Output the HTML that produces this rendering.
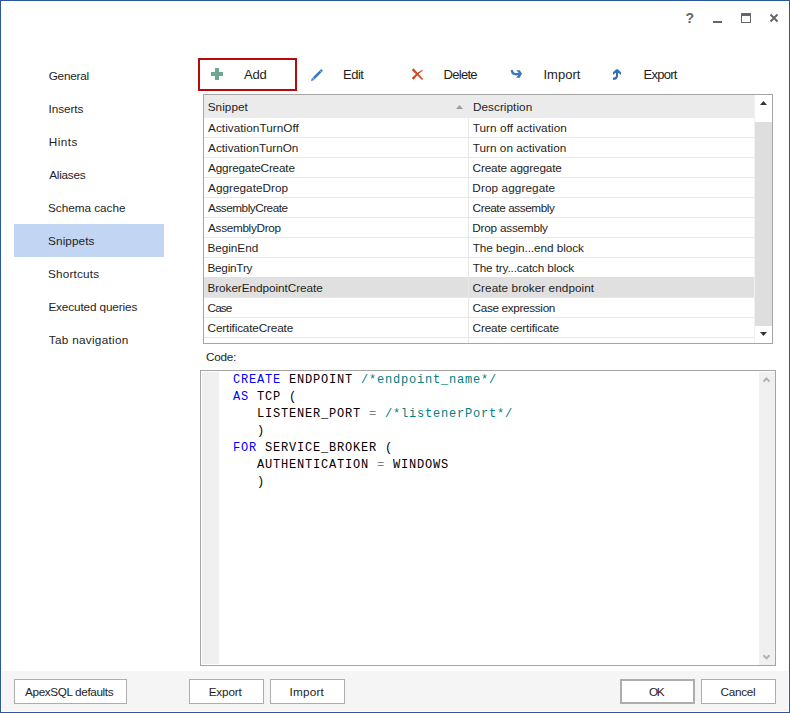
<!DOCTYPE html><html><head><meta charset="utf-8"><title>Options</title><style>
html,body{margin:0;padding:0;}
body{width:790px;height:713px;overflow:hidden;background:#fff;font-family:"Liberation Sans",sans-serif;font-size:11.75px;color:#1e1e1e;}
#win{position:absolute;left:0;top:0;width:788px;height:711px;border:1px solid #2b579a;background:#fff;overflow:hidden;}
.abs{position:absolute;}
.t{position:absolute;white-space:nowrap;line-height:16px;height:16px;}
#sel{left:13px;top:223px;width:150px;height:33px;background:#c2d5f2;}
#addbox{left:197px;top:57px;width:95px;height:29px;border:2px solid #b80a0a;}
#tbl{left:202px;top:93px;width:568px;height:248px;border:1px solid #a5a5a5;background:#fff;}
#hdr{left:203px;top:94px;width:550px;height:23px;background:#ebebeb;}
.row{position:absolute;left:203px;width:550px;height:19px;border-bottom:1px solid #e8e8e8;}
.row.sel{background:#e0e0e0;margin-top:-1px;height:20px;}
#colsep{left:467px;top:117px;width:1px;height:225px;background:#e8e8e8;}
#sb{left:754px;top:94px;width:17px;height:248px;background:#fff;}
#sbl{left:753px;top:94px;width:1px;height:248px;background:#f1f1f1;}
#thumb{left:0;top:27px;width:17px;height:204px;background:#dedede;}
#ed{left:199px;top:369px;width:574px;height:294px;border:1px solid #a5a5a5;background:#fff;overflow:hidden;}
#gut{left:1px;top:1px;width:17px;height:292px;background:#f0f0f0;}
#esb{left:558px;top:1px;width:16px;height:293px;background:#f0f0f0;}
pre{position:absolute;left:32px;top:1px;margin:0;font-family:"Liberation Mono",monospace;font-size:12px;letter-spacing:0.8px;line-height:17px;color:#000;}
.k{color:#0000ff;}.c{color:#008080;}.o{color:#808080;}
#foot{left:1px;top:670px;width:786px;height:40px;background:#f5f5f5;}
.btn{position:absolute;top:678px;height:23px;width:73px;border:1px solid #adadad;background:#fff;}
</style></head><body><div id="win">
<svg class="abs" style="left:680px;top:8px" width="104" height="20" viewBox="681 9 104 20">
<text x="685.5" y="23" font-family="Liberation Sans, sans-serif" font-weight="bold" font-size="14" fill="#666">?</text>
<rect x="713" y="21" width="9" height="2" fill="#666"/>
<rect x="741.5" y="14.5" width="9" height="8" fill="none" stroke="#666" stroke-width="1"/><rect x="741" y="13" width="10" height="3" fill="#666"/>
<path d="M770.5 14.5 L777.5 21.500 M777.5 14.5 L770.5 21.5" stroke="#666" stroke-width="2" fill="none"/>
</svg>
<div class="abs" id="sel"></div>
<div class="t" id="s0" style="left:47.71px;top:67px;letter-spacing:-0.237px">General</div>
<div class="t" id="s1" style="left:47.59px;top:100px;letter-spacing:-0.083px">Inserts</div>
<div class="t" id="s2" style="left:47.72px;top:133px;letter-spacing:0.451px">Hints</div>
<div class="t" id="s3" style="left:48.22px;top:166px;letter-spacing:-0.254px">Aliases</div>
<div class="t" id="s4" style="left:46.97px;top:199px;letter-spacing:-0.016px">Schema cache</div>
<div class="t" id="s5" style="left:47.12px;top:232px;letter-spacing:0.081px">Snippets</div>
<div class="t" id="s6" style="left:46.97px;top:265px;letter-spacing:0.190px">Shortcuts</div>
<div class="t" id="s7" style="left:47.40px;top:298px;letter-spacing:-0.125px">Executed queries</div>
<div class="t" id="s8" style="left:47.83px;top:331px;letter-spacing:0.279px">Tab navigation</div>
<div class="abs" id="addbox"></div>
<svg class="abs" style="left:205px;top:62px" width="480" height="24" viewBox="206 63 480 24">
<path d="M215 68h4v4h4v4h-4v4h-4v-4h-4v-4h4z" fill="#6ea790"/>
<path d="M311 81 L311.8 78.200 L313.8 80.200 Z" fill="#3a76bc"/><path d="M312.900 79.100 L322.100 69.900" stroke="#3a76bc" stroke-width="2.600" fill="none"/><path d="M312.600 77.400 L314.600 79.400 M319.700 70.300 L321.700 72.300" stroke="#fff" stroke-width="0.600" fill="none"/>
<path d="M413.500 68.300 L411.700 70.100 L422.100 80.100 L423.100 79.100 Z" fill="#d4481c"/><path d="M411.700 78 Q416.500 72.500 422.400 69.700 L422.900 70.600 Q417.800 73.600 413.600 79.700 Z" fill="#d4481c"/>
<path d="M516.300 70.200 L519.700 70.200 L522 73.600 L519.700 77.800 L516 77.800 L518.500 74.800 L518.900 73.300 L518.400 72.400 Z" fill="#3b78bd"/><path d="M512 71 C512.400 74.300 515 74.600 519.500 73.900" stroke="#3b78bd" stroke-width="2.400" stroke-linecap="round" fill="none"/>
<path d="M616.300 69.200 L617.700 69.200 L621 72.300 L621 75 L618.600 72.900 L618 73 L618 76 C618 78.500 616 80 613 80 L613 77.600 C615 77.600 616 76.800 616 75.500 L616 73 L615.400 72.900 L613 75 L613 72.300 Z" fill="#3470b6"/>
</svg>
<div class="t" id="tb0" style="font-size:13px;left:243.09px;top:66px;letter-spacing:-0.259px">Add</div>
<div class="t" id="tb1" style="font-size:13px;left:342.12px;top:66px;letter-spacing:-0.513px">Edit</div>
<div class="t" id="tb2" style="font-size:13px;left:442.56px;top:66px;letter-spacing:-0.709px">Delete</div>
<div class="t" id="tb3" style="font-size:13px;left:542.47px;top:66px;letter-spacing:0.028px">Import</div>
<div class="t" id="tb4" style="font-size:13px;left:642.56px;top:66px;letter-spacing:-0.756px">Export</div>
<div class="abs" id="tbl"></div><div class="abs" id="hdr"></div>
<div class="t" id="h0" style="left:206.70px;top:98px;letter-spacing:0.058px">Snippet</div><div class="t" id="h1" style="left:471.92px;top:98px;letter-spacing:0.051px">Description</div>
<svg class="abs" style="left:454px;top:103px" width="9" height="6"><path d="M1 5 L4.500 1 L8 5 Z" fill="#9e9e9e"/></svg>
<div class="row" style="top:117px"></div>
<div class="row" style="top:137px"></div>
<div class="row" style="top:157px"></div>
<div class="row" style="top:177px"></div>
<div class="row" style="top:197px"></div>
<div class="row" style="top:217px"></div>
<div class="row" style="top:237px"></div>
<div class="row" style="top:257px"></div>
<div class="row sel" style="top:277px"></div>
<div class="row" style="top:297px"></div>
<div class="row" style="top:317px"></div>
<div class="row" style="top:337px;height:5px;border:0"></div>
<div class="abs" id="colsep"></div>
<div class="t" id="r0a" style="left:207.07px;top:119px;letter-spacing:0.039px">ActivationTurnOff</div><div class="t" id="r0b" style="left:471.68px;top:119px;letter-spacing:0.082px">Turn off activation</div>
<div class="t" id="r1a" style="left:207.07px;top:139px;letter-spacing:-0.003px">ActivationTurnOn</div><div class="t" id="r1b" style="left:471.68px;top:139px;letter-spacing:0.036px">Turn on activation</div>
<div class="t" id="r2a" style="left:207.07px;top:159px;letter-spacing:-0.188px">AggregateCreate</div><div class="t" id="r2b" style="left:471.57px;top:159px;letter-spacing:-0.144px">Create aggregate</div>
<div class="t" id="r3a" style="left:207.07px;top:179px;letter-spacing:0.026px">AggregateDrop</div><div class="t" id="r3b" style="left:471.36px;top:179px;letter-spacing:0.088px">Drop aggregate</div>
<div class="t" id="r4a" style="left:207.07px;top:199px;letter-spacing:-0.477px">AssemblyCreate</div><div class="t" id="r4b" style="left:471.57px;top:199px;letter-spacing:-0.417px">Create assembly</div>
<div class="t" id="r5a" style="left:207.07px;top:219px;letter-spacing:-0.315px">AssemblyDrop</div><div class="t" id="r5b" style="left:471.36px;top:219px;letter-spacing:-0.232px">Drop assembly</div>
<div class="t" id="r6a" style="left:206.40px;top:239px;letter-spacing:-0.020px">BeginEnd</div><div class="t" id="r6b" style="left:471.68px;top:239px;letter-spacing:-0.054px">The begin...end block</div>
<div class="t" id="r7a" style="left:206.40px;top:259px;letter-spacing:-0.218px">BeginTry</div><div class="t" id="r7b" style="left:471.68px;top:259px;letter-spacing:-0.137px">The try...catch block</div>
<div class="t" id="r8a" style="left:206.40px;top:279px;letter-spacing:-0.043px">BrokerEndpointCreate</div><div class="t" id="r8b" style="left:471.57px;top:279px;letter-spacing:0.066px">Create broker endpoint</div>
<div class="t" id="r9a" style="left:206.57px;top:299px;letter-spacing:-0.869px">Case</div><div class="t" id="r9b" style="left:471.57px;top:299px;letter-spacing:-0.337px">Case expression</div>
<div class="t" id="r10a" style="left:206.57px;top:319px;letter-spacing:-0.156px">CertificateCreate</div><div class="t" id="r10b" style="left:471.57px;top:319px;letter-spacing:-0.134px">Create certificate</div>
<div class="abs" id="sbl"></div><div class="abs" id="sb"><div class="abs" id="thumb"></div>
<svg class="abs" style="left:0;top:0" width="17" height="248"><path d="M5 10 L12 10 L8.500 6 Z" fill="#333"/><path d="M5 237 L12 237 L8.500 241 Z" fill="#333"/></svg></div>
<div class="t" id="code" style="left:204.93px;top:348px;letter-spacing:-0.222px">Code:</div>
<div class="abs" id="ed"><div class="abs" id="gut"></div><div class="abs" id="esb"></div>
<svg class="abs" style="left:558px;top:0" width="16" height="294"><path d="M4.500 10.600 L7.500 7.400 L10.500 10.600" stroke="#b0b0b0" stroke-width="2" fill="none"/><path d="M4.500 284.200 L7.500 287.400 L10.500 284.200" stroke="#b0b0b0" stroke-width="2" fill="none"/></svg>
<pre><span class="k">CREATE</span> ENDPOINT <span class="c">/*endpoint_name*/</span>
<span class="k">AS</span> TCP (
   LISTENER_PORT <span class="o">=</span> <span class="c">/*listenerPort*/</span>
   )
<span class="k">FOR</span> SERVICE_BROKER (
   AUTHENTICATION <span class="o">=</span> WINDOWS
   )</pre></div>
<div class="abs" id="foot"></div>
<div class="btn" style="left:13px;width:111px"></div>
<div class="btn" style="left:188px"></div>
<div class="btn" style="left:269px"></div>
<div class="btn" style="left:619px;border-width:2px;width:71px;height:21px"></div>
<div class="btn" style="left:700px"></div>
<div class="t" id="b0" style="left:24.07px;top:683px;letter-spacing:-0.383px">ApexSQL defaults</div>
<div class="t" id="b1" style="left:207.72px;top:683px;letter-spacing:-0.190px">Export</div>
<div class="t" id="b2" style="left:288.59px;top:683px;letter-spacing:0.200px">Import</div>
<div class="t" id="b3" style="left:647.91px;top:683px;letter-spacing:-1.202px">OK</div>
<div class="t" id="b4" style="left:719.45px;top:683px;letter-spacing:-0.264px">Cancel</div>
</div></body></html>
